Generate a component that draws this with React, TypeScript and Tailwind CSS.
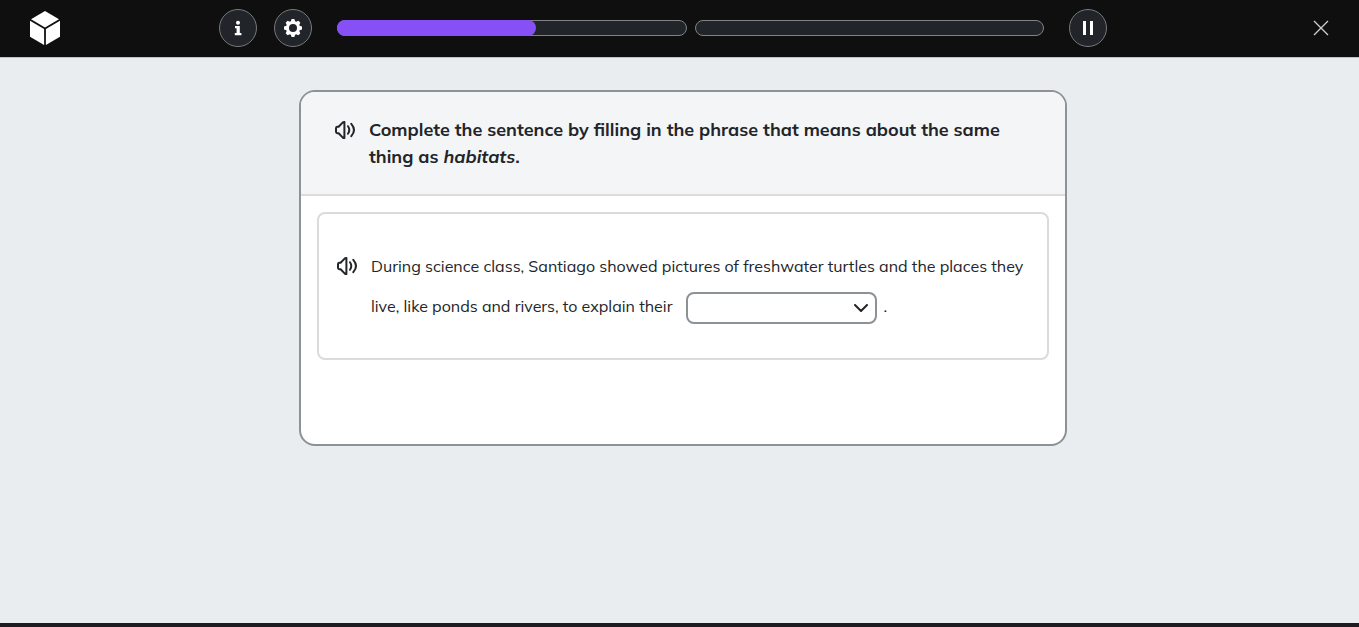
import { useState } from "react";
import type { ReactNode } from "react";

function CubeLogo() {
  return (
    <svg viewBox="0 0 30 34" className="h-[34px] w-[30px]" fill="#fff" aria-hidden="true">
      <path d="M15 0 29 8.3 15 16.4 1 8.3Z" />
      <path d="M0 9.7 14.1 17.9V34L0 25.8Z" />
      <path d="M30 9.7 15.9 17.9V34L30 25.8Z" />
    </svg>
  );
}

function SpeakerIcon() {
  return (
    <svg viewBox="0 0 22 20" className="h-5 w-[22px]" fill="none" stroke="#222529" strokeWidth="2" strokeLinecap="round" strokeLinejoin="round" aria-hidden="true">
      <path d="M2 8.2Q2 7 3.2 6.8H4.6L8.6 2.6Q9.6 1.8 10.4 2V18Q9.6 18.2 8.6 17.4L4.6 13.2H3.2Q2 13 2 11.8Z" />
      <path d="M14 6.2Q16.6 10 14 13.8" />
      <path d="M17.3 3.8Q22.7 10 17.3 16.2" />
    </svg>
  );
}

function ListenButton({ label }: { label: string }) {
  return (
    <button type="button" aria-label={label} className="shrink-0 cursor-pointer">
      <SpeakerIcon />
    </button>
  );
}

function RoundButton({ label, children }: { label: string; children: ReactNode }) {
  return (
    <button
      type="button"
      aria-label={label}
      className="flex size-[38px] shrink-0 cursor-pointer items-center justify-center rounded-full border border-[#77797b] bg-[#212529] text-white"
    >
      {children}
    </button>
  );
}

function ProgressBar({ value, label }: { value: number; label: string }) {
  return (
    <div
      role="progressbar"
      aria-label={label}
      aria-valuenow={value}
      className="relative h-4 flex-1 rounded-full border border-[#808284] bg-[#212529]"
    >
      {value > 0 && (
        <div className="absolute -inset-y-px -left-px rounded-full bg-[#8650f6]" style={{ width: `${value}%` }} />
      )}
    </div>
  );
}

const TEETH = [0, 45, 90, 135, 180, 225, 270, 315];

function TopBar() {
  return (
    <header className="flex h-[58px] items-center border-b border-[#c5bfc0] bg-[#0f0f0f] pb-px">
      <div className="w-[219px] shrink-0 pl-[30px]">
        <CubeLogo />
      </div>
      <div className="flex min-w-0 flex-1 items-center">
        <div className="flex gap-[17px]">
          <RoundButton label="Information">
            <svg viewBox="0 0 8 16" className="h-4 w-2" fill="currentColor" aria-hidden="true">
              <circle cx="4" cy="2.8" r="2" />
              <path d="M1 6H5.8V13H7.4V15.2H.8V13H2.6V8.2H1Z" />
            </svg>
          </RoundButton>
          <RoundButton label="Settings">
            <svg viewBox="-9 -9 18 18" className="size-[18px]" aria-hidden="true">
              {TEETH.map((angle) => (
                <path key={angle} d="M-2.5 -5.5 -1.4 -9H1.4L2.5 -5.5Z" fill="currentColor" transform={`rotate(${angle})`} />
              ))}
              <circle r="5.5" fill="none" stroke="currentColor" strokeWidth="3" />
            </svg>
          </RoundButton>
        </div>
        <div className="flex min-w-0 flex-1 gap-2 px-[25px]">
          <ProgressBar value={57.3} label="Part one" />
          <ProgressBar value={0} label="Part two" />
        </div>
        <RoundButton label="Pause">
          <svg viewBox="0 0 10 14" className="h-3.5 w-2.5" fill="currentColor" aria-hidden="true">
            <path d="M0 0H3V14H0ZM7 0H10V14H7Z" />
          </svg>
        </RoundButton>
      </div>
      <div className="flex w-[252px] shrink-0 justify-end pr-[30px]">
        <button type="button" aria-label="Close" className="cursor-pointer">
          <svg viewBox="0 0 16 16" className="size-4" stroke="#d0d0d0" strokeWidth="1.3" aria-hidden="true">
            <path d="M1 1 15 15M15 1 1 15" />
          </svg>
        </button>
      </div>
    </header>
  );
}

function AnswerSelect() {
  const [answer, setAnswer] = useState("");
  return (
    <span className="relative mr-1.5 ml-3.5 inline-block h-8 w-[191px] align-middle">
      <select
        aria-label="Missing phrase"
        value={answer}
        onChange={(event) => setAnswer(event.target.value)}
        className="block h-8 w-full appearance-none rounded-lg border-2 border-[#8d9296] bg-white pr-8 pl-3 text-base"
      >
        <option value=""></option>
      </select>
      <svg viewBox="0 0 14 8" className="pointer-events-none absolute top-3 right-[9px] h-2 w-3.5" fill="none" stroke="#222529" strokeWidth="2" strokeLinecap="round" strokeLinejoin="round" aria-hidden="true">
        <path d="M1 1 7 7 13 1" />
      </svg>
    </span>
  );
}

export default function App() {
  return (
    <div className="flex min-h-screen flex-col border-b-4 border-[#1e1c20] bg-[#e9edf0] font-['Mulish','Muli','Open_Sans',sans-serif] text-[#222529]">
      <TopBar />
      <main className="flex-1 pt-8 pb-8 pl-[7px]">
        <section className="mx-auto min-h-[356px] max-w-3xl overflow-hidden rounded-2xl border-2 border-[#8d9296] bg-white">
          <div className="flex items-start gap-[13px] border-b-2 border-[#dadcdd] bg-[#f4f5f7] py-6 pr-14 pl-[33px]">
            <div className="flex h-7 items-center">
              <ListenButton label="Listen to the instructions" />
            </div>
            <h1 className="text-lg leading-[27px] font-bold">
              Complete the sentence by filling in the phrase that means about the same thing as <em>habitats</em>.
            </h1>
          </div>
          <div className="p-4">
            <div className="flex items-start gap-[13px] rounded-lg border-2 border-[#d8dcdc] py-8 pr-4 pl-[17px]">
              <div className="flex h-10 items-center">
                <ListenButton label="Listen to the sentence" />
              </div>
              <p className="text-base leading-10">
                During science class, Santiago showed pictures of freshwater turtles and the places they live, like
                ponds and rivers, to explain their
                <AnswerSelect />.
              </p>
            </div>
          </div>
        </section>
      </main>
    </div>
  );
}
